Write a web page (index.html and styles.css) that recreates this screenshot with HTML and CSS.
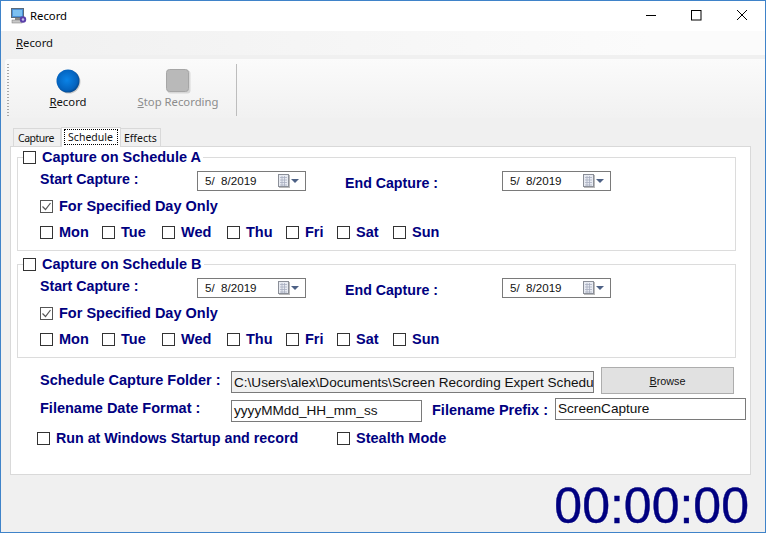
FILE: index.html
```html
<!DOCTYPE html>
<html lang="en">
<head>
<meta charset="utf-8">
<title>Record</title>
<link rel="stylesheet" href="styles.css">
</head>
<body>
<div class="window">
  <header class="titlebar">
    <svg class="app-icon" width="16" height="16" viewBox="0 0 16 16">
      <rect x="0.5" y="0.5" width="12" height="9" fill="#4a90d8" stroke="#5a6a7a"/>
      <rect x="2" y="2" width="9" height="6" fill="#7cc0f0"/>
      <rect x="4" y="10" width="5" height="2" fill="#8a8a8a"/>
      <rect x="1" y="12" width="10" height="3" fill="#c8c8c8" stroke="#777" stroke-width="0.5"/>
      <circle cx="12" cy="11.5" r="3.2" fill="#5a3fa8"/>
      <circle cx="12" cy="11.5" r="1.2" fill="#c9c0f0"/>
    </svg>
    <span class="title">Record</span>
    <div class="winbtns">
      <svg width="12" height="12" viewBox="0 0 12 12"><path d="M0 5.500h10" stroke="#000" fill="none"/></svg>
      <svg width="12" height="12" viewBox="0 0 12 12"><rect x="0.500" y="0.500" width="9.500" height="9.500" stroke="#000" fill="none"/></svg>
      <svg width="12" height="12" viewBox="0 0 12 12"><path d="M1 0l10 10M11 0L1 10" stroke="#000" fill="none"/></svg>
    </div>
  </header>

  <nav class="menubar"><span class="menu-item"><u>R</u>ecord</span></nav>

  <div class="toolbar">
    <div class="grip"></div>
    <button class="tool" type="button">
      <svg width="26" height="26" viewBox="0 0 26 26">
        <defs>
          <radialGradient id="rec" cx="0.45" cy="0.45" r="0.6">
            <stop offset="0" stop-color="#0a84e8"/>
            <stop offset="0.75" stop-color="#0462bd"/>
            <stop offset="1" stop-color="#04407f"/>
          </radialGradient>
        </defs>
        <circle cx="14" cy="14" r="11.500" fill="#000" opacity="0.18"/>
        <circle cx="13" cy="13" r="11.500" fill="url(#rec)"/>
      </svg>
      <span class="tool-label"><u>R</u>ecord</span>
    </button>
    <button class="tool tool-stop" type="button">
      <svg width="26" height="26" viewBox="0 0 26 26">
        <rect x="2.500" y="2.500" width="23" height="23" rx="3" fill="#000" opacity="0.12"/>
        <rect x="1.500" y="1.500" width="22" height="22" rx="3" fill="#b9b9b9" stroke="#a6a6a6"/>
      </svg>
      <span class="tool-label"><u>S</u>top Recording</span>
    </button>
    <div class="tool-sep"></div>
  </div>

  <div class="tabs">
    <span class="tab tab-first">Capture</span>
    <span class="tab tab-active"><span class="focus">Schedule</span></span>
    <span class="tab tab-last">Effects</span>
  </div>

  <main class="panel">
    <fieldset class="group">
      <legend class="legend"><span class="cb"></span><span>Capture on Schedule A</span></legend>
      <div class="dates">
        <span class="lbl lbl-start">Start Capture :</span>
        <div class="date"><span class="date-text">5/ &nbsp;8/2019</span><svg width="24" height="14" viewBox="0 0 24 14"><rect x="2" y="1" width="11" height="13" fill="#bbb"/><rect x="1.500" y="0.500" width="10" height="12" fill="#e8ebf2" stroke="#8b8f98"/><path d="M3 3.500h7M3 6h7M3 8.500h7M3 11h7M5 2v10M7.500 2v10" stroke="#a8afc0" stroke-width="0.8"/><path d="M14 5h8l-4 4z" fill="#4d6185"/></svg></div>
        <span class="lbl lbl-end">End Capture :</span>
        <div class="date"><span class="date-text">5/ &nbsp;8/2019</span><svg width="24" height="14" viewBox="0 0 24 14"><rect x="2" y="1" width="11" height="13" fill="#bbb"/><rect x="1.500" y="0.500" width="10" height="12" fill="#e8ebf2" stroke="#8b8f98"/><path d="M3 3.500h7M3 6h7M3 8.500h7M3 11h7M5 2v10M7.500 2v10" stroke="#a8afc0" stroke-width="0.8"/><path d="M14 5h8l-4 4z" fill="#4d6185"/></svg></div>
      </div>
      <label class="check check-day"><span class="cb cb-on"><svg width="11" height="11" viewBox="0 0 11 11"><path d="M1.500 5.500l3 3 5-6.500" stroke="#555" stroke-width="1.200" fill="none"/></svg></span><span>For Specified Day Only</span></label>
      <div class="days">
        <label class="check"><span class="cb"></span><span>Mon</span></label>
        <label class="check"><span class="cb"></span><span>Tue</span></label>
        <label class="check"><span class="cb"></span><span>Wed</span></label>
        <label class="check"><span class="cb"></span><span>Thu</span></label>
        <label class="check"><span class="cb"></span><span>Fri</span></label>
        <label class="check"><span class="cb"></span><span>Sat</span></label>
        <label class="check"><span class="cb"></span><span>Sun</span></label>
      </div>
    </fieldset>

    <fieldset class="group group-b">
      <legend class="legend"><span class="cb"></span><span>Capture on Schedule B</span></legend>
      <div class="dates">
        <span class="lbl lbl-start">Start Capture :</span>
        <div class="date"><span class="date-text">5/ &nbsp;8/2019</span><svg width="24" height="14" viewBox="0 0 24 14"><rect x="2" y="1" width="11" height="13" fill="#bbb"/><rect x="1.500" y="0.500" width="10" height="12" fill="#e8ebf2" stroke="#8b8f98"/><path d="M3 3.500h7M3 6h7M3 8.500h7M3 11h7M5 2v10M7.500 2v10" stroke="#a8afc0" stroke-width="0.8"/><path d="M14 5h8l-4 4z" fill="#4d6185"/></svg></div>
        <span class="lbl lbl-end">End Capture :</span>
        <div class="date"><span class="date-text">5/ &nbsp;8/2019</span><svg width="24" height="14" viewBox="0 0 24 14"><rect x="2" y="1" width="11" height="13" fill="#bbb"/><rect x="1.500" y="0.500" width="10" height="12" fill="#e8ebf2" stroke="#8b8f98"/><path d="M3 3.500h7M3 6h7M3 8.500h7M3 11h7M5 2v10M7.500 2v10" stroke="#a8afc0" stroke-width="0.8"/><path d="M14 5h8l-4 4z" fill="#4d6185"/></svg></div>
      </div>
      <label class="check check-day"><span class="cb cb-on"><svg width="11" height="11" viewBox="0 0 11 11"><path d="M1.500 5.500l3 3 5-6.500" stroke="#555" stroke-width="1.200" fill="none"/></svg></span><span>For Specified Day Only</span></label>
      <div class="days">
        <label class="check"><span class="cb"></span><span>Mon</span></label>
        <label class="check"><span class="cb"></span><span>Tue</span></label>
        <label class="check"><span class="cb"></span><span>Wed</span></label>
        <label class="check"><span class="cb"></span><span>Thu</span></label>
        <label class="check"><span class="cb"></span><span>Fri</span></label>
        <label class="check"><span class="cb"></span><span>Sat</span></label>
        <label class="check"><span class="cb"></span><span>Sun</span></label>
      </div>
    </fieldset>

    <div class="row-folder">
      <span class="lbl">Schedule Capture Folder :</span>
      <div class="field field-folder">C:\Users\alex\Documents\Screen Recording Expert Schedu</div>
      <button class="browse" type="button"><u>B</u>rowse</button>
    </div>
    <div class="row-format">
      <span class="lbl">Filename Date Format :</span>
      <div class="field field-format">yyyyMMdd_HH_mm_ss</div>
      <span class="lbl lbl-prefix">Filename Prefix :</span>
      <div class="field field-prefix">ScreenCapture</div>
    </div>
    <div class="row-options">
      <label class="check check-run"><span class="cb"></span><span>Run at Windows Startup and record</span></label>
      <label class="check"><span class="cb"></span><span>Stealth Mode</span></label>
    </div>
  </main>

  <footer class="clock">00:00:00</footer>
</div>
</body>
</html>
```

FILE: styles.css
```css
* { box-sizing: border-box; }
html, body { margin: 0; padding: 0; }
body { width: 766px; height: 533px; overflow: hidden; font-family: "Liberation Sans", Arial, sans-serif; }

.window {
  width: 766px; height: 533px;
  border: 1px solid #3f83c9;
  background: #f0f0f0;
  display: flex; flex-direction: column;
  overflow: hidden;
}

.titlebar {
  height: 30px; flex: none;
  background: #fff;
  display: flex; align-items: center;
  padding-left: 10px;
}
.app-icon { margin-right: 3px; }
.title { font: 11.300px "Noto Sans", sans-serif; color: #000; margin-top: -1px; }
.winbtns { margin-left: auto; display: flex; gap: 33px; padding-right: 17px; }

.menubar {
  height: 24px; flex: none;
  background: linear-gradient(90deg, #f0f0f0, #fbfbfb 85%);
  display: flex; align-items: center;
  padding-left: 15px;
}
.menu-item { font: 11.300px "Noto Sans", sans-serif; color: #111; margin-top: -1px; }

.toolbar {
  height: 59px; flex: none;
  margin: 4px 0 0 4px;
  background: linear-gradient(180deg, #fbfbfb, #f1f1f1);
  display: flex; align-items: flex-start;
  position: relative;
  border-radius: 3px 0 0 3px;
}
.grip {
  width: 2px; height: 52px; margin: 5px 0 0 2px;
  background: repeating-linear-gradient(180deg, #a8a8a8 0 1px, transparent 1px 3px);
}
.tool {
  border: 0; background: none; padding: 0;
  display: flex; flex-direction: column; align-items: center;
  font: 11.300px "Noto Sans", sans-serif; color: #111;
}
.tool:nth-child(2) { width: 60px; margin: 9px 0 0 29px; }
.tool-stop { width: 100px; margin: 9px 0 0 30px; color: #8c8c8c; }
.tool-label { line-height: 16px; white-space: nowrap; }
.tool-sep { width: 1px; height: 52px; background: #bdbdbd; margin: 5px 0 0 8px; }

.tabs {
  height: 20px; flex: none;
  margin: 8px 0 0 12px;
  display: flex; align-items: flex-end;
  position: relative; z-index: 1;
}
.tab {
  font: 10.500px "Noto Sans", sans-serif; color: #111;
  height: 18px; padding: 0 4px;
  background: #f0f0f0;
  border: 1px solid #d9d9d9; border-bottom: 0;
  display: flex; align-items: center;
  margin-bottom: 0;
}
.tab-first { width: 48px; letter-spacing: -0.5px; }
.tab-active {
  width: 60px; height: 20px; margin-bottom: -1px;
  background: #fff; padding: 0 2px;
  justify-content: center;
}
.focus { border: 1px dotted #000; width: 54px; height: 16px; display: flex; align-items: center; justify-content: center; margin-top: -1px; margin-left: -1px; }
.tab-last { width: 41px; margin-left: -1px; padding-left: 3px; }

.panel {
  flex: none;
  width: 741px; height: 329px;
  margin-left: 9px;
  background: #fff;
  border: 1px solid #d9d9d9;
  padding: 0 6px;
  display: flex; flex-direction: column;
  font: bold 14.500px "Liberation Sans", Arial, sans-serif;
  color: #000080;
}

.group {
  margin: 3px 0 0 0;
  padding: 0 0 0 22px;
  width: 719px; height: 101px;
  border: 1px solid #dcdcdc;
  min-inline-size: 0;
}
.group-b { margin-top: 6px; }
.legend {
  padding: 0; margin-left: -17px;
  display: flex; align-items: center; gap: 6px;
  height: 14px; line-height: 14px;
  padding-right: 2px;
}

.cb {
  width: 13px; height: 13px; flex: none;
  border: 1px solid #333;
  background: #fff;
  display: inline-flex; align-items: center; justify-content: center;
}
.cb-on { border-color: #555; }

.dates { display: grid; grid-template-columns: 157px 148px 157px 109px; align-items: start; height: 32px; padding-top: 7px; font-size: 14.200px; }
.lbl { white-space: nowrap; flex: none; }
.lbl-start { margin-top: 0; }
.lbl-end { margin-top: 4px; }

.date {
  width: 109px; height: 20px;
  border: 1px solid #7a7a7a;
  background: #fff;
  display: flex; align-items: center; justify-content: space-between;
  padding: 0 4px 0 7px;
  font: 11.600px "Liberation Sans", Arial, sans-serif;
  color: #111;
}
.date-text { white-space: nowrap; margin-top: -1px; }

.check { display: flex; align-items: center; gap: 6px; white-space: nowrap; }
.check-day { margin-top: 2px; height: 16px; }

.days {
  display: grid;
  grid-template-columns: 62px 60px 65px 59px 51px 56px auto;
  margin-top: 10px; height: 16px;
}

.row-folder, .row-format, .row-options { display: flex; align-items: flex-start; }
.row-folder { margin: 13px 0 0 23px; }
.row-folder .lbl { width: 191px; margin-top: 1px; }
.field {
  flex: none;
  height: 22px; border: 1px solid #7a7a7a; background: #fff;
  padding: 2px 2px;
  font: 13.600px "Liberation Sans", Arial, sans-serif; color: #111;
  white-space: nowrap; overflow: hidden;
}
.field-folder { width: 363px; background: #f0f0f0; padding-top: 3px; }
.browse {
  flex: none;
  width: 133px; height: 27px; margin: -4px 0 0 7px;
  background: #e1e1e1; border: 1px solid #adadad;
  font: 10.800px "Liberation Sans", Arial, sans-serif; color: #111;
}
.row-format { margin: 6px 0 0 23px; }
.row-format .lbl { width: 191px; margin-top: 0; }
.field-format { width: 191px; }
.row-format .lbl-prefix { width: 123px; margin: 2px 0 0 10px; }
.field-prefix { width: 191px; margin-top: -2px; }

.row-options { margin: 8px 0 0 20px; }
.check-run { width: 300px; font-size: 14.250px; }

.clock {
  flex: none;
  margin-top: 2px;
  text-align: right;
  padding-right: 16px;
  font: 50px/58px "Liberation Sans", Arial, sans-serif;
  color: #000080;
  -webkit-text-stroke: 0.4px #000080;
}
```
